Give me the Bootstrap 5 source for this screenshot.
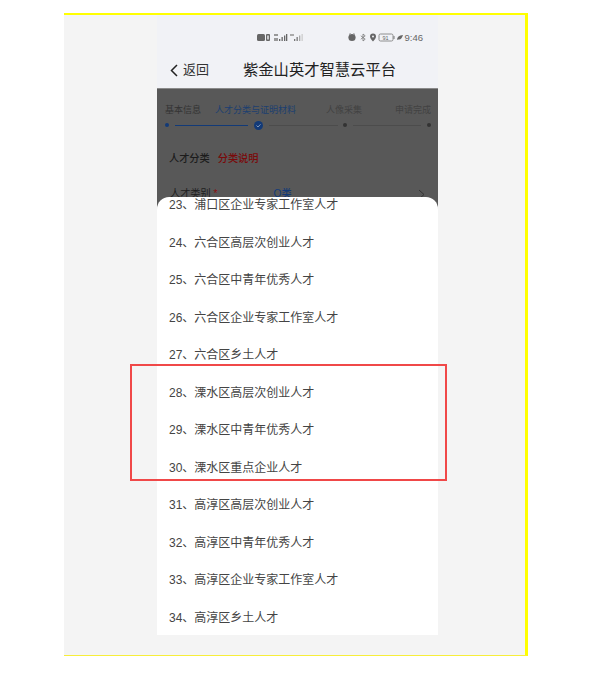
<!DOCTYPE html>
<html lang="zh-CN">
<head>
    <meta charset="UTF-8">
    <meta name="viewport" content="width=device-width, initial-scale=1.0">
    <title>紫金山英才智慧云平台</title>
    <link href="https://cdn.jsdelivr.net/npm/bootstrap@5.3.0/dist/css/bootstrap.min.css" rel="stylesheet">
    <style>
        body { background: #fff; font-family: "Liberation Sans", "Noto Sans CJK SC", sans-serif; }
        .frame { position: relative; width: 464px; height: 643px; margin: 13px 0 0 64px; background: #f4f4f4; border-top: 2px solid #ffff00; border-right: 3px solid #ffff00; border-bottom: 1px solid #f7ee3a; }
        .phone { width: 281px; height: 620px; margin-left: 93px; background: #f1f2f6; display: flex; flex-direction: column; }
        .status-bar { height: 37px; padding: 18px 15px 0 100px; color: #666; font-size: 9.5px; }
        .status-bar svg { display: block; }
        .top-nav { height: 36px; padding-left: 13px; color: #222; }
        .back-link { font-size: 13px; color: #333; width: 73px; }
        .back-link svg { margin-right: 5px; }
        .page-title { font-size: 15.3px; line-height: 20px; }
        .dim-panel { height: 109px; background: #585858; overflow: hidden; border-top: 1px solid #8a8a8a; flex-shrink: 0; }
        .step-labels { padding: 15px 0 0 8px; font-size: 9px; line-height: 12px; color: #333; white-space: nowrap; }
        .step-labels .on { color: #1c3f70; margin-left: 14px; }
        .step-labels .off { color: #424242; margin-left: 30px; }
        .step-labels .off + .off { margin-left: 33px; }
        .step-track { height: 12px; margin: 3px 0 0 8px; width: 266px; }
        .dot { width: 4px; height: 4px; border-radius: 50%; background: #333; flex-shrink: 0; }
        .dot-on { background: #123a78; }
        .line-on { height: 1px; background: #123a78; width: 73px; margin: 0 6px 0 6px; }
        .line-off { height: 1px; background: #4c4c4c; width: 69px; margin: 0 5px 0 6px; }
        .line-off2 { height: 1px; background: #4c4c4c; flex: 1; margin: 0 6px; }
        .section-head { margin-top: 21px; padding-left: 12px; font-size: 10.2px; line-height: 14px; color: #1c1c1c; font-weight: 500; }
        .section-head .warn { color: #7a0a0a; margin-left: 8px; font-weight: 500; }
        .field-row { margin-top: 21px; padding: 0 13px 0 13px; font-size: 10.2px; line-height: 14px; color: #1e1e1e; }
        .field-row .req { color: #8a0e0e; }
        .field-row .val { color: #123a78; font-weight: 500; margin-left: 56px; }
        .sheet-back { flex: 1; background: #585858; min-height: 0; }
        .sheet { height: 100%; background: #fff; border-radius: 12px 12px 0 0; overflow: hidden; }
        .sheet .list-group { margin-top: -10px; }
        .sheet .list-group-item { height: 37.5px; padding: 0 0 0 12px; line-height: 37.5px; font-size: 12px; color: #444; background: transparent; border: 0; white-space: nowrap; }
        .red-box { position: absolute; left: 65.5px; top: 349px; width: 317px; height: 117px; border: 2.5px solid #f04848; }
    </style>
</head>
<body>
    <div class="frame">
        <div class="phone">
            <div class="status-bar d-flex align-items-start">
                <svg width="47" height="9" viewBox="0 0 47 9">
                    <rect x="0" y="1" width="8" height="7" rx="1.5" fill="#666"/>
                    <rect x="9" y="1" width="4" height="7" rx="1" fill="#666"/>
                    <rect x="10.3" y="2.5" width="1.4" height="4" fill="#f1f2f6"/>
                    <rect x="17" y="1" width="4" height="2" fill="#999"/><rect x="17" y="5" width="4" height="3" fill="#999"/>
                    <rect x="22" y="6" width="1.3" height="2" fill="#666"/><rect x="24.5" y="4" width="1.3" height="4" fill="#666"/><rect x="27" y="2.5" width="1.3" height="5.5" fill="#666"/><rect x="29" y="1" width="1.3" height="7" fill="#666"/>
                    <rect x="33" y="1" width="4" height="2" fill="#aaa"/>
                    <rect x="37" y="6" width="1.3" height="2" fill="#777"/><rect x="39.5" y="4" width="1.3" height="4" fill="#777"/><rect x="42" y="2.5" width="1.3" height="5.5" fill="#aaa"/><rect x="44.5" y="1" width="1.3" height="7" fill="#ccc"/>
                </svg>
                <svg class="ms-auto" width="48" height="9" viewBox="0 0 48 9">
                    <circle cx="4" cy="4.5" r="3.6" fill="#666"/>
                    <path d="M1 1.500l1.500-1M7 1.500l-1.500-1" stroke="#666" stroke-width=".8"/>
                    <path d="M15 1l2.200 1.800-4.400 3.400M12.800 2.800l4.400 3.400L15 8V1" fill="none" stroke="#777" stroke-width=".8"/>
                    <path d="M25 8.500c-2-2.300-3-3.600-3-5a3 3 0 0 1 6 0c0 1.400-1 2.700-3 5z" fill="#666"/>
                    <circle cx="25" cy="3.500" r="1" fill="#f1f2f6"/>
                    <rect x="31" y="1" width="14" height="7" rx="1.500" fill="none" stroke="#777" stroke-width=".8"/>
                    <rect x="45.500" y="3" width="1" height="3" fill="#777"/>
                    <text x="34.500" y="7" font-size="5.500" fill="#666" font-family="Liberation Sans">91</text>
                </svg>
                <svg width="6" height="9" viewBox="0 0 6 9" style="margin:0 2px 0 1px"><path d="M0 7c0-3 2-4.500 6-5-1 3-2 5-5 4.500z" fill="#666"/></svg>
                <span style="line-height:10px">9:46</span>
            </div>
            <div class="top-nav d-flex align-items-center">
                <div class="back-link d-flex align-items-center">
                    <svg width="8" height="13" viewBox="0 0 8 13"><path d="M7 1L1.500 6.500 7 12" fill="none" stroke="#222" stroke-width="1.500"/></svg>
                    <span>返回</span>
                </div>
                <div class="page-title">紫金山英才智慧云平台</div>
            </div>
            <div class="dim-panel">
                <div class="step-labels d-flex">
                    <span>基本信息</span><span class="on">人才分类与证明材料</span><span class="off">人像采集</span><span class="off">申请完成</span>
                </div>
                <div class="step-track d-flex align-items-center">
                    <span class="dot dot-on"></span>
                    <span class="line-on"></span>
                    <svg width="9" height="9" viewBox="0 0 9 9" class="flex-shrink-0"><circle cx="4.500" cy="4.500" r="4.500" fill="#123a78"/><path d="M2.500 4.500l1.500 1.500L6.500 3.300" fill="none" stroke="#9fb0c8" stroke-width=".8"/></svg>
                    <span class="line-off"></span>
                    <span class="dot"></span>
                    <span class="line-off2"></span>
                    <span class="dot"></span>
                </div>
                <div class="section-head">人才分类<span class="warn">分类说明</span></div>
                <div class="field-row d-flex align-items-center">
                    <span>人才类别 <span class="req">*</span></span>
                    <span class="val">Q类</span>
                    <svg class="ms-auto" width="7" height="11" viewBox="0 0 7 11"><path d="M1 1l5 4.500L1 10" fill="none" stroke="#333" stroke-width="1"/></svg>
                </div>
            </div>
            <div class="sheet-back">
                <div class="sheet">
                    <div class="list-group list-group-flush">
                        <div class="list-group-item">23、浦口区企业专家工作室人才</div>
                        <div class="list-group-item">24、六合区高层次创业人才</div>
                        <div class="list-group-item">25、六合区中青年优秀人才</div>
                        <div class="list-group-item">26、六合区企业专家工作室人才</div>
                        <div class="list-group-item">27、六合区乡土人才</div>
                        <div class="list-group-item">28、溧水区高层次创业人才</div>
                        <div class="list-group-item">29、溧水区中青年优秀人才</div>
                        <div class="list-group-item">30、溧水区重点企业人才</div>
                        <div class="list-group-item">31、高淳区高层次创业人才</div>
                        <div class="list-group-item">32、高淳区中青年优秀人才</div>
                        <div class="list-group-item">33、高淳区企业专家工作室人才</div>
                        <div class="list-group-item">34、高淳区乡土人才</div>
                    </div>
                </div>
            </div>
        </div>
        <div class="red-box"></div>
    </div>
    <script src="https://cdn.jsdelivr.net/npm/bootstrap@5.3.0/dist/js/bootstrap.bundle.min.js"></script>
</body>
</html>
